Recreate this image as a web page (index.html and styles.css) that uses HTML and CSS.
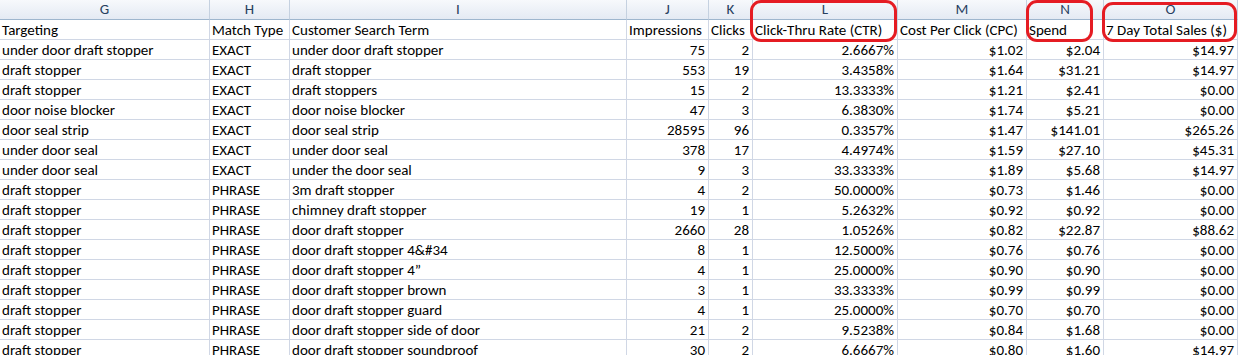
FILE: index.html
```html
<!DOCTYPE html>
<html>
<head>
<meta charset="utf-8">
<link rel="stylesheet" href="styles.css">
</head>
<body>
<div class="sheet">
  <div class="grid">
    <div class="ch">G</div><div class="ch">H</div><div class="ch">I</div><div class="ch">J</div><div class="ch">K</div><div class="ch">L</div><div class="ch">M</div><div class="ch">N</div><div class="ch">O</div>

    <div class="c">Targeting</div><div class="c">Match Type</div><div class="c">Customer Search Term</div><div class="c">Impressions</div><div class="c">Clicks</div><div class="c">Click-Thru Rate (CTR)</div><div class="c">Cost Per Click (CPC)</div><div class="c">Spend</div><div class="c">7 Day Total Sales ($)</div>

    <div class="c">under door draft stopper</div><div class="c">EXACT</div><div class="c">under door draft stopper</div><div class="c n">75</div><div class="c n">2</div><div class="c n">2.6667%</div><div class="c n">$1.02</div><div class="c n">$2.04</div><div class="c n">$14.97</div>

    <div class="c">draft stopper</div><div class="c">EXACT</div><div class="c">draft stopper</div><div class="c n">553</div><div class="c n">19</div><div class="c n">3.4358%</div><div class="c n">$1.64</div><div class="c n">$31.21</div><div class="c n">$14.97</div>

    <div class="c">draft stopper</div><div class="c">EXACT</div><div class="c">draft stoppers</div><div class="c n">15</div><div class="c n">2</div><div class="c n">13.3333%</div><div class="c n">$1.21</div><div class="c n">$2.41</div><div class="c n">$0.00</div>

    <div class="c">door noise blocker</div><div class="c">EXACT</div><div class="c">door noise blocker</div><div class="c n">47</div><div class="c n">3</div><div class="c n">6.3830%</div><div class="c n">$1.74</div><div class="c n">$5.21</div><div class="c n">$0.00</div>

    <div class="c">door seal strip</div><div class="c">EXACT</div><div class="c">door seal strip</div><div class="c n">28595</div><div class="c n">96</div><div class="c n">0.3357%</div><div class="c n">$1.47</div><div class="c n">$141.01</div><div class="c n">$265.26</div>

    <div class="c">under door seal</div><div class="c">EXACT</div><div class="c">under door seal</div><div class="c n">378</div><div class="c n">17</div><div class="c n">4.4974%</div><div class="c n">$1.59</div><div class="c n">$27.10</div><div class="c n">$45.31</div>

    <div class="c">under door seal</div><div class="c">EXACT</div><div class="c">under the door seal</div><div class="c n">9</div><div class="c n">3</div><div class="c n">33.3333%</div><div class="c n">$1.89</div><div class="c n">$5.68</div><div class="c n">$14.97</div>

    <div class="c">draft stopper</div><div class="c">PHRASE</div><div class="c">3m draft stopper</div><div class="c n">4</div><div class="c n">2</div><div class="c n">50.0000%</div><div class="c n">$0.73</div><div class="c n">$1.46</div><div class="c n">$0.00</div>

    <div class="c">draft stopper</div><div class="c">PHRASE</div><div class="c">chimney draft stopper</div><div class="c n">19</div><div class="c n">1</div><div class="c n">5.2632%</div><div class="c n">$0.92</div><div class="c n">$0.92</div><div class="c n">$0.00</div>

    <div class="c">draft stopper</div><div class="c">PHRASE</div><div class="c">door draft stopper</div><div class="c n">2660</div><div class="c n">28</div><div class="c n">1.0526%</div><div class="c n">$0.82</div><div class="c n">$22.87</div><div class="c n">$88.62</div>

    <div class="c">draft stopper</div><div class="c">PHRASE</div><div class="c">door draft stopper 4&amp;#34</div><div class="c n">8</div><div class="c n">1</div><div class="c n">12.5000%</div><div class="c n">$0.76</div><div class="c n">$0.76</div><div class="c n">$0.00</div>

    <div class="c">draft stopper</div><div class="c">PHRASE</div><div class="c">door draft stopper 4”</div><div class="c n">4</div><div class="c n">1</div><div class="c n">25.0000%</div><div class="c n">$0.90</div><div class="c n">$0.90</div><div class="c n">$0.00</div>

    <div class="c">draft stopper</div><div class="c">PHRASE</div><div class="c">door draft stopper brown</div><div class="c n">3</div><div class="c n">1</div><div class="c n">33.3333%</div><div class="c n">$0.99</div><div class="c n">$0.99</div><div class="c n">$0.00</div>

    <div class="c">draft stopper</div><div class="c">PHRASE</div><div class="c">door draft stopper guard</div><div class="c n">4</div><div class="c n">1</div><div class="c n">25.0000%</div><div class="c n">$0.70</div><div class="c n">$0.70</div><div class="c n">$0.00</div>

    <div class="c">draft stopper</div><div class="c">PHRASE</div><div class="c">door draft stopper side of door</div><div class="c n">21</div><div class="c n">2</div><div class="c n">9.5238%</div><div class="c n">$0.84</div><div class="c n">$1.68</div><div class="c n">$0.00</div>

    <div class="c">draft stopper</div><div class="c">PHRASE</div><div class="c">door draft stopper soundproof</div><div class="c n">30</div><div class="c n">2</div><div class="c n">6.6667%</div><div class="c n">$0.80</div><div class="c n">$1.60</div><div class="c n">$14.97</div>
  </div>
  <div class="mark mark-l"></div>
  <div class="mark mark-n"></div>
  <div class="mark mark-o"></div>
</div>
</body>
</html>
```

FILE: styles.css
```css
html, body {
  margin: 0;
  padding: 0;
  background: #ffffff;
  overflow: hidden;
}

.sheet {
  position: relative;
  width: 1238px;
  height: 355px;
  overflow: hidden;
  font-family: Carlito, Calibri, "Liberation Sans", sans-serif;
  font-size: 15px;
  color: #000;
}

.grid {
  display: grid;
  grid-template-columns: 210px 80px 337px 82px 44px 145px 129px 77px 134px;
  grid-auto-rows: 20px;
}

.ch {
  box-sizing: border-box;
  height: 20px;
  border-right: 1px solid #c5d1e0;
  border-bottom: 1px solid #9eb6ce;
  background: linear-gradient(#f7f9fc, #e4eaf3);
  color: #27405f;
  text-align: center;
  line-height: 19px;
}

.c {
  box-sizing: border-box;
  height: 20px;
  border-right: 1px solid #d0d7e5;
  border-bottom: 1px solid #d0d7e5;
  padding: 1px 2px 0;
  line-height: 18px;
  white-space: nowrap;
  overflow: hidden;
}

.n {
  text-align: right;
  padding-right: 3px;
}

.mark {
  position: absolute;
  box-sizing: border-box;
  border: 3px solid #e51c23;
  border-radius: 11px;
}

.mark-l { left: 750px; top: 0px; width: 147px; height: 42px; }
.mark-n { left: 1026px; top: 0px; width: 67px; height: 42px; }
.mark-o { left: 1102px; top: 2px; width: 135px; height: 40px; }
```
